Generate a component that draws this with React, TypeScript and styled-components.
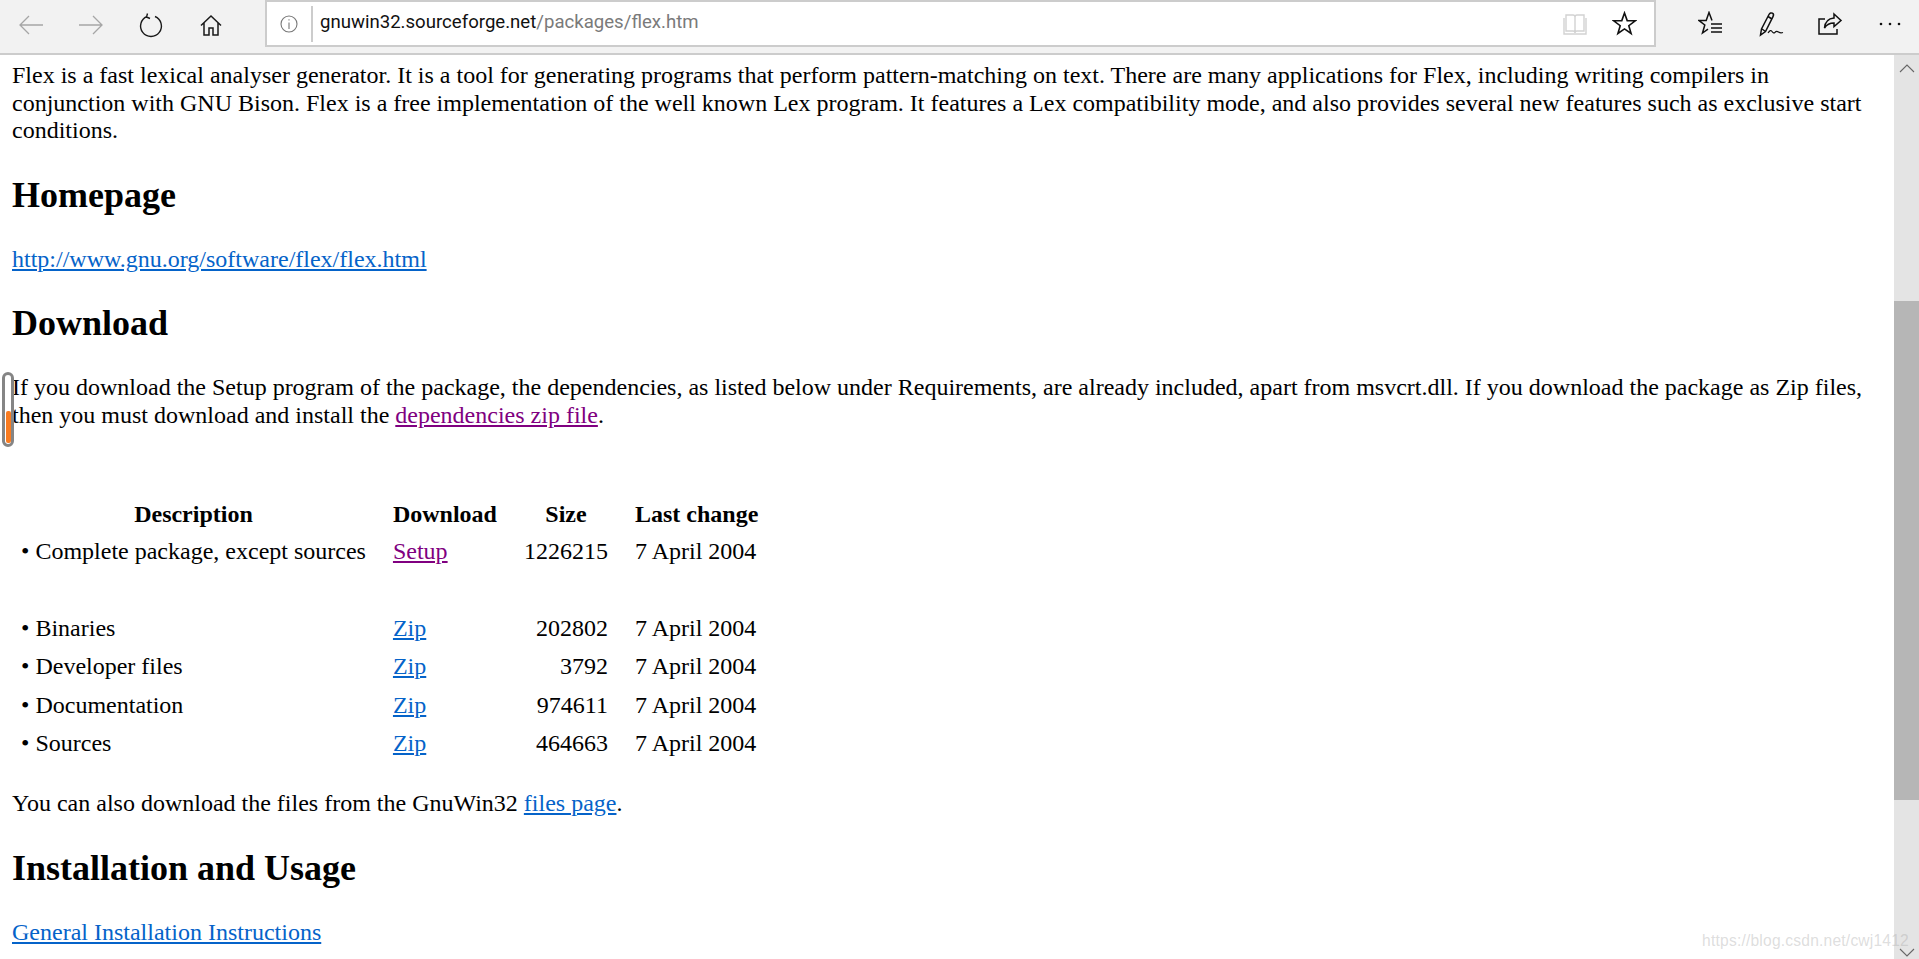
import styled, { createGlobalStyle } from 'styled-components'

const rows = [
  { name: 'Binaries', size: '202802' },
  { name: 'Developer files', size: '3792' },
  { name: 'Documentation', size: '974611' },
  { name: 'Sources', size: '464663' },
]

function BackIcon() {
  return (
    <svg width="26" height="26" viewBox="0 0 26 26" fill="none" stroke="#a6a6a6" strokeWidth="1.3">
      <path d="M2 13h23M11 4l-9 9 9 9" />
    </svg>
  )
}

function ForwardIcon() {
  return (
    <svg width="26" height="26" viewBox="0 0 26 26" fill="none" stroke="#a6a6a6" strokeWidth="1.3">
      <path d="M1 13h23M15 4l9 9-9 9" />
    </svg>
  )
}

function RefreshIcon() {
  return (
    <svg width="26" height="26" viewBox="0 0 26 26" fill="none" stroke="#1a1a1a" strokeWidth="1.4">
      <path d="M9 4.500A10.400 10.400 0 1 0 17 4.500M9.500 1.500L8.500 5l3.500 1.500" />
    </svg>
  )
}

function HomeIcon() {
  return (
    <svg width="26" height="26" viewBox="0 0 26 26" fill="none" stroke="#1a1a1a" strokeWidth="1.5">
      <path d="M3 13.500L13 4l10 9.500M6 11v12h5v-7h4v7h5V11" />
    </svg>
  )
}

function InfoIcon() {
  return (
    <svg width="20" height="20" viewBox="0 0 20 20" fill="none" stroke="#777" strokeWidth="1.1">
      <circle cx="10" cy="10" r="8" />
      <path d="M10 8.500V15M10 5.200v1.400" />
    </svg>
  )
}

function ReadingIcon() {
  return (
    <svg width="24" height="24" viewBox="0 0 24 24" fill="none" stroke="#d2d2d2" strokeWidth="1.4">
      <path d="M3 3h7c1.200 0 2 .8 2 2v16c0-1-.8-2-2-2H3zM21 3h-7c-1.200 0-2 .8-2 2v16c0-1 .8-2 2-2h7z" />
      <path d="M1 6v16h22V6" />
    </svg>
  )
}

function StarIcon() {
  return (
    <svg width="25" height="25" viewBox="0 0 25 25" fill="none" stroke="#111" strokeWidth="1.600" strokeLinejoin="miter">
      <path d="M12.500 2l2.700 7.600 8 .2-6.400 4.900 2.300 7.800-6.600-4.600-6.600 4.600 2.300-7.800-6.400-4.900 8-.2z" />
    </svg>
  )
}

function FavoritesIcon() {
  return (
    <svg width="26" height="26" viewBox="0 0 26 26" fill="none" stroke="#111" strokeWidth="1.500">
      <path d="M14 9.500L11 1.500 8.200 9.500H1l5.800 4.500-2.300 8 5.500-3.800" />
      <path d="M13 13h11M13 17h11M13 21h11" />
    </svg>
  )
}

function NotesIcon() {
  return (
    <svg width="26" height="26" viewBox="0 0 26 26" fill="none" stroke="#111" strokeWidth="1.500">
      <path d="M2.500 24l1-6L11 3.500c.8-1.500 2.200-2 3.400-1.300 1.200.7 1.400 2 .6 3.500L7.500 20.500z" />
      <path d="M4 18l3.500 2.500M10 5.500l4 2.500" />
      <path d="M10 22c2-3 3-3 4-1.500s2 2 3 .8 2-1.300 3.500-.3 3 1 4.500.5" strokeWidth="1.200" />
    </svg>
  )
}

function ShareIcon() {
  return (
    <svg width="26" height="26" viewBox="0 0 26 26" fill="none" stroke="#111" strokeWidth="1.500">
      <path d="M8 8H2v15h18v-5" />
      <path d="M17 3l7 6.500-7 6v-3.500c-4 0-7 1-9.500 5 .5-6 4-9.500 9.500-10z" />
    </svg>
  )
}

function MoreIcon() {
  return (
    <svg width="26" height="26" viewBox="0 0 26 26" fill="#111">
      <circle cx="4" cy="13" r="1.300" />
      <circle cx="13" cy="13" r="1.300" />
      <circle cx="22" cy="13" r="1.300" />
    </svg>
  )
}

function ChevronIcon({ down }: { down?: boolean }) {
  return (
    <svg width="16" height="9" viewBox="0 0 16 9" fill="none" stroke="#666" strokeWidth="1.100">
      <path d={down ? 'M1 1l7 7 7-7' : 'M1 8l7-7 7 7'} />
    </svg>
  )
}

export default function App() {
  return (
    <>
      <GlobalStyle />
      <Window>
        <Toolbar>
          <NavGroup>
            <NavButton><BackIcon /></NavButton>
            <NavButton><ForwardIcon /></NavButton>
            <NavButton><RefreshIcon /></NavButton>
            <NavButton><HomeIcon /></NavButton>
          </NavGroup>
          <AddressBar>
            <InfoSlot><InfoIcon /></InfoSlot>
            <Url>
              gnuwin32.sourceforge.net<UrlPath>/packages/flex.htm</UrlPath>
            </Url>
            <AddressIcons>
              <ReadingIcon />
              <StarIcon />
            </AddressIcons>
          </AddressBar>
          <ActionGroup>
            <FavoritesIcon />
            <NotesIcon />
            <ShareIcon />
            <MoreIcon />
          </ActionGroup>
        </Toolbar>
        <Viewport>
          <Page>
            <Paragraph>
              Flex is a fast lexical analyser generator. It is a tool for generating programs that perform pattern-matching on text. There are many applications for Flex, including writing compilers in conjunction with GNU Bison. Flex is a free implementation of the well known Lex program. It features a Lex compatibility mode, and also provides several new features such as exclusive start conditions.
            </Paragraph>
            <Heading>Homepage</Heading>
            <Paragraph>
              <Link href="#">http://www.gnu.org/software/flex/flex.html</Link>
            </Paragraph>
            <Heading>Download</Heading>
            <Paragraph>
              If you download the Setup program of the package, the dependencies, as listed below under Requirements, are already included, apart from msvcrt.dll. If you download the package as Zip files, then you must download and install the <Link href="#" $visited>dependencies zip file</Link>.
            </Paragraph>
            <DownloadTable>
              <thead>
                <tr>
                  <HeadCell>Description</HeadCell>
                  <HeadCell>Download</HeadCell>
                  <HeadCell>Size</HeadCell>
                  <HeadCell>Last change</HeadCell>
                </tr>
              </thead>
              <tbody>
                <tr>
                  <Cell>• Complete package, except sources</Cell>
                  <Cell><Link href="#" $visited>Setup</Link></Cell>
                  <SizeCell>1226215</SizeCell>
                  <Cell>7 April 2004</Cell>
                </tr>
                <tr>
                  <Cell colSpan={4}>&nbsp;</Cell>
                </tr>
                {rows.map((row) => (
                  <tr key={row.name}>
                    <Cell>• {row.name}</Cell>
                    <Cell><Link href="#">Zip</Link></Cell>
                    <SizeCell>{row.size}</SizeCell>
                    <Cell>7 April 2004</Cell>
                  </tr>
                ))}
              </tbody>
            </DownloadTable>
            <Paragraph>
              You can also download the files from the GnuWin32 <Link href="#">files page</Link>.
            </Paragraph>
            <Heading>Installation and Usage</Heading>
            <Paragraph>
              <Link href="#">General Installation Instructions</Link>
            </Paragraph>
          </Page>
          <ScrollTrack>
            <ScrollArrow><ChevronIcon /></ScrollArrow>
            <ScrollThumb />
            <ScrollArrow $bottom><ChevronIcon down /></ScrollArrow>
          </ScrollTrack>
          <Gauge><GaugeFill /></Gauge>
          <Watermark>https://blog.csdn.net/cwj1412</Watermark>
        </Viewport>
      </Window>
    </>
  )
}

const GlobalStyle = createGlobalStyle`
  html, body {
    margin: 0;
    padding: 0;
    height: 100%;
    overflow: hidden;
    background: #ffffff;
  }
`

const Window = styled.div`
  width: 1919px;
  height: 959px;
  display: flex;
  flex-direction: column;
  overflow: hidden;
`

const Toolbar = styled.header`
  height: 53px;
  flex: none;
  display: flex;
  align-items: flex-start;
  background: #f2f2f2;
  border-bottom: 2px solid #cccccc;
  box-sizing: content-box;
`

const NavGroup = styled.nav`
  width: 265px;
  height: 49px;
  padding-left: 17.500px;
  box-sizing: border-box;
  display: flex;
  align-items: center;
  gap: 18px;
`

const NavButton = styled.span`
  width: 26px;
  height: 26px;
  margin-right: 16px;
  display: flex;
`

const AddressBar = styled.div`
  width: 1391px;
  height: 47px;
  box-sizing: border-box;
  border: 2px solid #cccccc;
  background: #ffffff;
  display: flex;
  align-items: center;
`

const InfoSlot = styled.span`
  width: 32px;
  height: 36px;
  margin-left: 12px;
  border-right: 2px solid #cccccc;
  display: flex;
  align-items: center;
`

const Url = styled.div`
  flex: 1;
  margin: -4px 0 0 7px;
  font: 18.6px/24px Roboto, 'Open Sans', sans-serif;
  color: #111111;
  white-space: nowrap;
`

const UrlPath = styled.span`
  color: #7a7a7a;
`

const AddressIcons = styled.div`
  display: flex;
  align-items: center;
  gap: 25px;
  padding-right: 17px;
`

const ActionGroup = styled.div`
  flex: 1;
  height: 48px;
  display: flex;
  align-items: center;
  padding: 0 0 0 42px;
  gap: 33.500px;
`

const Viewport = styled.main`
  position: relative;
  flex: 1;
  min-height: 0;
  display: flex;
  background: #ffffff;
`

const Page = styled.div`
  flex: 1;
  min-width: 0;
  padding: 7px 12px 0;
  box-sizing: border-box;
  overflow: hidden;
  font-family: 'Liberation Serif', 'Times New Roman', serif;
  font-size: 24px;
  line-height: 27.5px;
  color: #000000;
`

const Paragraph = styled.p`
  margin: 0 0 24px;
`

const Heading = styled.h2`
  margin: 30px 0;
  font-size: 36px;
  line-height: 41px;
  font-weight: 700;

  &:last-of-type {
    margin-top: 31px;
  }
`

const Link = styled.a<{ $visited?: boolean }>`
  color: ${({ $visited }) => ($visited ? '#800080' : '#0563c9')};
  text-decoration: underline;
`

const DownloadTable = styled.table`
  border-collapse: separate;
  border-spacing: 0;
  margin: 67px 0 27px;
  font: inherit;
`

const HeadCell = styled.th`
  height: 37px;
  padding: 0 13.500px;
  text-align: center;
  font-weight: 700;
  &:first-child {
    padding-left: 9px;
  }
`

const Cell = styled.td`
  height: 38.300px;
  padding: 0 13.500px;
  text-align: left;
  &:first-child {
    padding-left: 9px;
  }
`

const SizeCell = styled(Cell)`
  text-align: right;
`

const ScrollTrack = styled.aside`
  width: 25px;
  flex: none;
  background: #e4e4e4;
  display: flex;
  flex-direction: column;
  align-items: center;
`

const ScrollArrow = styled.div<{ $bottom?: boolean }>`
  width: 100%;
  height: ${({ $bottom }) => ($bottom ? '159px' : '246px')};
  padding-top: ${({ $bottom }) => ($bottom ? '148px' : '9px')};
  box-sizing: border-box;
  display: flex;
  justify-content: center;
  align-items: flex-start;
`

const ScrollThumb = styled.div`
  width: 100%;
  height: 499px;
  flex: none;
  background: #b6b6b6;
`

const Gauge = styled.div`
  position: absolute;
  left: 2px;
  top: 317px;
  width: 12px;
  height: 75px;
  box-sizing: border-box;
  border: 3px solid #858585;
  border-radius: 6px;
  background: #ffffff;
  display: flex;
  align-items: flex-end;
  padding: 0 0 1px;
  justify-content: center;
`

const GaugeFill = styled.div`
  width: 5px;
  height: 32px;
  border-radius: 2px;
  background: #f97b20;
`

const Watermark = styled.div`
  position: absolute;
  right: 10px;
  bottom: 9px;
  font: 15.6px/18px 'Liberation Sans', Arial, sans-serif;
  letter-spacing: 0.2px;
  color: rgba(170, 170, 170, 0.4);
`
